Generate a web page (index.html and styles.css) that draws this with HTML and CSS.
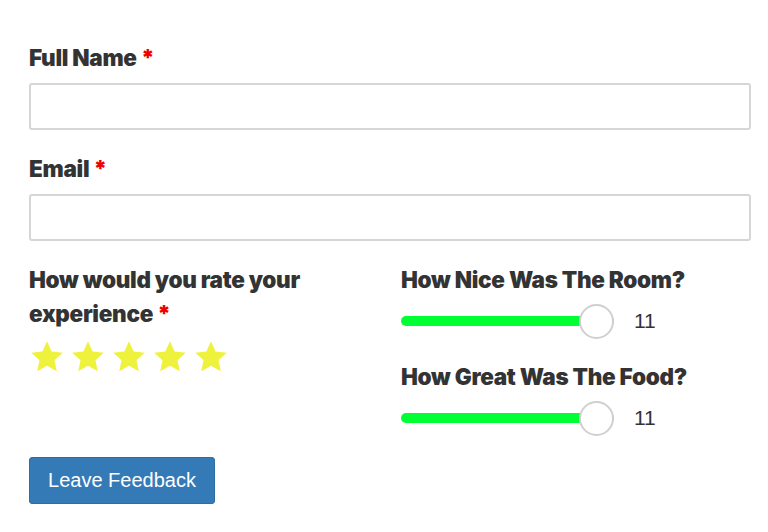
FILE: index.html
```html
<!DOCTYPE html>
<html>
<head>
<meta charset="utf-8">
<link rel="stylesheet" href="styles.css">
</head>
<body>
<form class="form">
  <div class="field">
    <label class="label">Full Name <span class="req">*</span></label>
    <input class="input" type="text">
  </div>
  <div class="field">
    <label class="label">Email <span class="req">*</span></label>
    <input class="input" type="text">
  </div>
  <div class="cols">
    <div class="col col-left">
      <label class="label">How would you rate your experience <span class="req">*</span></label>
      <div class="stars">
        <svg class="star" viewBox="0 0 24 24"><polygon points="12,1.5 15.1,8.3 22.5,9.1 17,14.1 18.5,21.5 12,17.8 5.5,21.5 7,14.1 1.5,9.1 8.9,8.3"/></svg>
        <svg class="star" viewBox="0 0 24 24"><polygon points="12,1.5 15.1,8.3 22.5,9.1 17,14.1 18.5,21.5 12,17.8 5.5,21.5 7,14.1 1.5,9.1 8.9,8.3"/></svg>
        <svg class="star" viewBox="0 0 24 24"><polygon points="12,1.5 15.1,8.3 22.5,9.1 17,14.1 18.5,21.5 12,17.8 5.5,21.5 7,14.1 1.5,9.1 8.9,8.3"/></svg>
        <svg class="star" viewBox="0 0 24 24"><polygon points="12,1.5 15.1,8.3 22.5,9.1 17,14.1 18.5,21.5 12,17.8 5.5,21.5 7,14.1 1.5,9.1 8.9,8.3"/></svg>
        <svg class="star" viewBox="0 0 24 24"><polygon points="12,1.5 15.1,8.3 22.5,9.1 17,14.1 18.5,21.5 12,17.8 5.5,21.5 7,14.1 1.5,9.1 8.9,8.3"/></svg>
      </div>
    </div>
    <div class="col">
      <label class="label">How Nice Was The Room?</label>
      <div class="slider-row">
        <input class="range" type="range" min="0" max="11" value="11">
        <span class="value">11</span>
      </div>
      <label class="label">How Great Was The Food?</label>
      <div class="slider-row">
        <input class="range" type="range" min="0" max="11" value="11">
        <span class="value">11</span>
      </div>
    </div>
  </div>
  <button class="btn" type="button">Leave Feedback</button>
</form>
</body>
</html>
```
FILE: styles.css
```css
* { box-sizing: border-box; }
html, body { margin: 0; background: #fff; }
body { font-family: "Liberation Sans", Arial, sans-serif; color: #333; }
.form { padding: 41px 17px 0 29px; }
.field { display: flex; flex-direction: column; margin-bottom: 22px; }
.label {
  display: block;
  font-family: Inter, "Liberation Sans", sans-serif;
  font-weight: 900;
  font-size: 22.5px;
  letter-spacing: -0.3px;
  line-height: 34px;
  color: #333;
}
.req { color: #e00; letter-spacing: 0; }
.input {
  margin-top: 8px;
  height: 47px;
  width: 100%;
  border: 2px solid #d6d6d6;
  border-radius: 3px;
  background: #fff;
}
.cols { display: grid; grid-template-columns: 372px 1fr; }
.col-left { padding-right: 30px; }
.stars { display: flex; gap: 5px; margin-top: 8px; }
.star { width: 36px; height: 36px; fill: #eff23c; }
.slider-row { display: flex; align-items: center; height: 36px; margin: 6px 0 21px; }
.range {
  -webkit-appearance: none;
  appearance: none;
  width: 213px;
  height: 36px;
  margin: 0;
  background: transparent;
}
.range::-webkit-slider-runnable-track {
  height: 10px;
  border-radius: 5px;
  background: #00ff33;
}
.range::-webkit-slider-thumb {
  -webkit-appearance: none;
  width: 35px;
  height: 35px;
  margin-top: -12.5px;
  border-radius: 50%;
  background: #fff;
  border: 2px solid #d0d0d0;
}
.value { margin-left: 20px; font-size: 21px; color: #333; }
.btn {
  margin-top: 0;
  width: 186px;
  height: 47px;
  background: #337ab7;
  border: 1px solid #2e6da4;
  border-radius: 3px;
  color: #fff;
  font-family: "Liberation Sans", Arial, sans-serif;
  font-size: 20px;
}
```
